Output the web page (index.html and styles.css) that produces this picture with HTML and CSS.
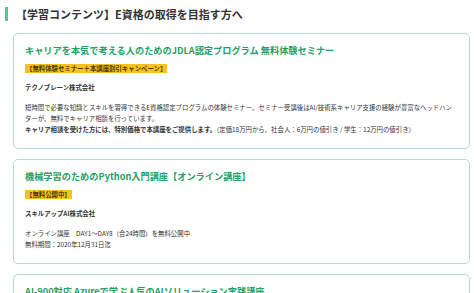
FILE: index.html
```html
<!DOCTYPE html>
<html>
<head>
    <title>E資格の取得を目指す方へ</title>
    <link rel="stylesheet" href="styles.css">
</head>
<body>
    <div class="content">
        <h2 class="section-title">【学習コンテンツ】E資格の取得を目指す方へ</h2>

        <div class="card">
            <h3 class="card-title">キャリアを本気で考える人のためのJDLA認定プログラム 無料体験セミナー</h3>
            <div class="tag">【無料体験セミナー＋本講座割引キャンペーン】</div>
            <p class="company">テクノブレーン株式会社</p>
            <p class="desc">短時間で必要な知識とスキルを習得できるE資格認定プログラムの体験セミナー。セミナー受講後はAI/技術系キャリア支援の経験が豊富なヘッドハンターが、無料でキャリア相談を行っています。<br><b>キャリア相談を受けた方には、特別価格で本講座をご提供します。</b>（定価18万円から、社会人：6万円の値引き / 学生：12万円の値引き）</p>
        </div>

        <div class="card">
            <h3 class="card-title">機械学習のためのPython入門講座【オンライン講座】</h3>
            <div class="tag">【無料公開中】</div>
            <p class="company">スキルアップAI株式会社</p>
            <p class="desc">オンライン講座　DAY1〜DAY8（合24時間）を無料公開中<br>無料期間：2020年12月31日迄</p>
        </div>

        <div class="card">
            <h3 class="card-title">AI-900対応 Azureで学ぶ人気のAIソリューション実践講座</h3>
            <div class="tag">【無料公開中】</div>
            <p class="company">スキルアップAI株式会社</p>
        </div>
    </div>
</body>
</html>
```

FILE: styles.css
```css
body {
    margin: 0;
    background-color: #ffffff;
    color: #333333;
    font-family: "Noto Sans CJK JP", "Noto Sans", sans-serif;
}
.content {
    padding: 7px 4px 0 13px;
}
.section-title {
    margin: 0 0 12px -8px;
    padding-left: 8px;
    border-left: 3px solid #5cc28e;
    font-size: 11px;
    line-height: 14px;
    font-weight: bold;
    color: #333333;
}
.card {
    border: 1px solid #b4dcd3;
    border-radius: 5px;
    padding: 9px 11px 13px;
    margin-bottom: 10px;
}
.card-title {
    margin: 0 0 7px;
    font-size: 9.2px;
    line-height: 14px;
    font-weight: bold;
    color: #23a066;
}
.tag {
    width: fit-content;
    background-color: #f6c21c;
    color: #4a3a10;
    font-size: 6.4px;
    line-height: 9px;
    font-weight: bold;
    padding: 0 1px;
}
.company {
    margin: 10px 0 9px;
    font-size: 6.4px;
    line-height: 10px;
    font-weight: bold;
}
.desc {
    margin: 0;
    font-size: 6.4px;
    line-height: 11px;
}
```
